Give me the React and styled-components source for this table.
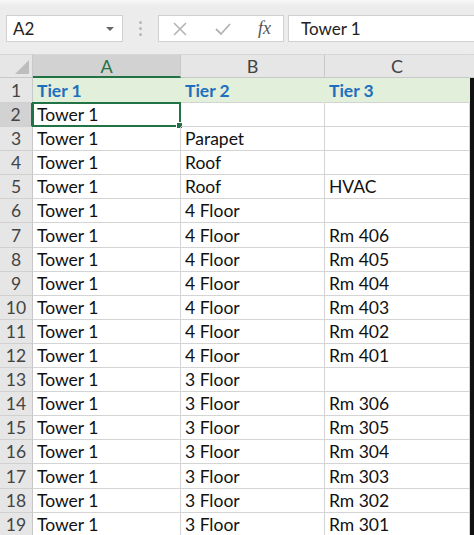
import React from "react";
import styled, { createGlobalStyle } from "styled-components";

const GlobalStyle = createGlobalStyle`
  html, body {
    margin: 0;
    padding: 0;
    background: #ffffff;
    overflow: hidden;
  }
`;

const rows = [
  ["Tower 1", "", ""],
  ["Tower 1", "Parapet", ""],
  ["Tower 1", "Roof", ""],
  ["Tower 1", "Roof", "HVAC"],
  ["Tower 1", "4 Floor", ""],
  ["Tower 1", "4 Floor", "Rm 406"],
  ["Tower 1", "4 Floor", "Rm 405"],
  ["Tower 1", "4 Floor", "Rm 404"],
  ["Tower 1", "4 Floor", "Rm 403"],
  ["Tower 1", "4 Floor", "Rm 402"],
  ["Tower 1", "4 Floor", "Rm 401"],
  ["Tower 1", "3 Floor", ""],
  ["Tower 1", "3 Floor", "Rm 306"],
  ["Tower 1", "3 Floor", "Rm 305"],
  ["Tower 1", "3 Floor", "Rm 304"],
  ["Tower 1", "3 Floor", "Rm 303"],
  ["Tower 1", "3 Floor", "Rm 302"],
  ["Tower 1", "3 Floor", "Rm 301"],
];

export default function App() {
  return (
    <Window>
      <GlobalStyle />
      <FormulaBar>
        <NameBox>
          <span>A2</span>
          <Caret />
        </NameBox>
        <Dots>
          <i />
          <i />
          <i />
        </Dots>
        <FxBox>
          <svg width="16" height="16" viewBox="0 0 16 16">
            <path d="M2 2 L14 14 M14 2 L2 14" stroke="#b4b4b4" strokeWidth="1.6" fill="none" />
          </svg>
          <svg width="18" height="16" viewBox="0 0 18 16">
            <path d="M2 8 L7 13 L16 3" stroke="#b4b4b4" strokeWidth="1.8" fill="none" />
          </svg>
          <FxLabel>fx</FxLabel>
        </FxBox>
        <FormulaInput>Tower 1</FormulaInput>
      </FormulaBar>

      <Sheet>
        <Corner>
          <svg width="14" height="14" viewBox="0 0 14 14">
            <path d="M14 0 L14 14 L0 14 Z" fill="#bdbdbd" />
          </svg>
        </Corner>
        <ColHeader $selected>A</ColHeader>
        <ColHeader>B</ColHeader>
        <ColHeader $last>C</ColHeader>
        <HeaderEdge />

        <RowHeader>1</RowHeader>
        <TitleCell>Tier 1</TitleCell>
        <TitleCell>Tier 2</TitleCell>
        <TitleCell>Tier 3</TitleCell>
        <Edge />

        {rows.map((r, i) => (
          <React.Fragment key={i}>
            <RowHeader $selected={i === 0}>{i + 2}</RowHeader>
            {r.map((v, j) =>
              i === 0 && j === 0 ? (
                <ActiveCell key={j}>
                  {v}
                  <Handle />
                </ActiveCell>
              ) : (
                <Cell key={j}>{v}</Cell>
              )
            )}
            <Edge />
          </React.Fragment>
        ))}
      </Sheet>
    </Window>
  );
}

const Window = styled.div`
  width: 474px;
  height: 535px;
  overflow: hidden;
  background: #ffffff;
  font-family: Lato, "Liberation Sans", sans-serif;
`;

const FormulaBar = styled.div`
  height: 54px;
  box-sizing: border-box;
  padding: 15px 0 0 6px;
  display: flex;
  align-items: flex-start;
  background: linear-gradient(#f8f8f8 0px, #ececec 6px, #ececec 100%);
`;

const Box = styled.div`
  height: 27px;
  box-sizing: border-box;
  background: #ffffff;
  border: 1px solid #d0d0d0;
  display: flex;
  align-items: center;
`;

const NameBox = styled(Box)`
  width: 117px;
  padding: 0 8px 0 6px;
  justify-content: space-between;
  font-size: 17px;
  color: #222;
`;

const Caret = styled.div`
  width: 0;
  height: 0;
  border-left: 4px solid transparent;
  border-right: 4px solid transparent;
  border-top: 4px solid #666;
`;

const Dots = styled.div`
  width: 35px;
  height: 27px;
  display: flex;
  flex-direction: column;
  align-items: center;
  justify-content: center;
  gap: 3px;
  i {
    width: 3px;
    height: 3px;
    border-radius: 50%;
    background: #b8b8b8;
  }
`;

const FxBox = styled(Box)`
  width: 126px;
  padding: 0 12px 0 13px;
  justify-content: space-between;
`;

const FxLabel = styled.span`
  font-family: "Liberation Serif", serif;
  font-style: italic;
  font-size: 18px;
  color: #555;
`;

const FormulaInput = styled(Box)`
  flex: 1;
  margin-left: 4px;
  border-right: none;
  padding-left: 12px;
  font-size: 17px;
  color: #222;
`;

const Sheet = styled.div`
  display: grid;
  grid-template-columns: 33px 148px 144px 145px 4px;
  grid-template-rows: 24px 25px;
  grid-auto-rows: 24.1px;
  background: #ffffff;
`;

const Corner = styled.div`
  background: #e6e6e6;
  border-right: 1px solid #c8c8c8;
  border-bottom: 1px solid #c8c8c8;
  border-top: 1px solid #d6d6d6;
  display: flex;
  align-items: flex-end;
  justify-content: flex-end;
  padding: 0 3px 3px 0;
  box-sizing: border-box;
`;

const ColHeader = styled.div`
  box-sizing: border-box;
  background: ${(p) => (p.$selected ? "#d2d2d2" : "#e6e6e6")};
  border-top: 1px solid #d6d6d6;
  border-right: 1px solid ${(p) => (p.$last ? "#e6e6e6" : "#c8c8c8")};
  border-bottom: ${(p) => (p.$selected ? "2px solid #217346" : "1px solid #c8c8c8")};
  display: flex;
  align-items: center;
  justify-content: center;
  font-size: 18px;
  color: ${(p) => (p.$selected ? "#217346" : "#444")};
`;

const HeaderEdge = styled.div`
  background: #e6e6e6;
  border-top: 1px solid #d6d6d6;
  border-bottom: 1px solid #c8c8c8;
`;

const RowHeader = styled.div`
  box-sizing: border-box;
  background: ${(p) => (p.$selected ? "#d2d2d2" : "#e6e6e6")};
  border-right: ${(p) => (p.$selected ? "2px solid #217346" : "1px solid #c8c8c8")};
  border-bottom: 1px solid #d0d0d0;
  display: flex;
  align-items: flex-end;
  justify-content: center;
  padding-bottom: 1px;
  font-size: 17.5px;
  color: #444;
`;

const Cell = styled.div`
  position: relative;
  box-sizing: border-box;
  border-right: 1px solid #d4d4d4;
  border-bottom: 1px solid #d4d4d4;
  padding: 0 4px 1px;
  display: flex;
  align-items: flex-end;
  font-size: 17.5px;
  color: #111;
  white-space: nowrap;
`;

const TitleCell = styled(Cell)`
  background: #e2efda;
  border-right-color: #e2efda;
  font-weight: 700;
  color: #1f6fbf;
`;

const ActiveCell = styled(Cell)`
  border: 2px solid #217346;
  margin: -1px 0 0 -1px;
  padding-left: 3px;
  padding-bottom: 0;
`;

const Handle = styled.div`
  position: absolute;
  right: -4px;
  bottom: -4px;
  width: 5px;
  height: 5px;
  background: #217346;
  border: 1px solid #ffffff;
`;

const Edge = styled.div`
  background: #111111;
`;
